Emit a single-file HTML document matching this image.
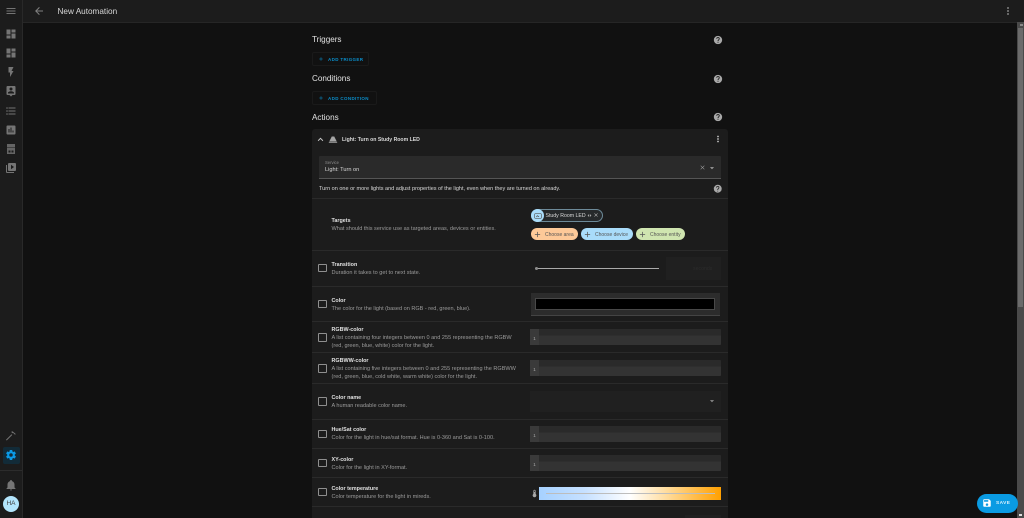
<!DOCTYPE html>
<html><head><meta charset="utf-8">
<style>
html,body{margin:0;padding:0;width:1024px;height:518px;overflow:hidden;background:#111;font-family:"Liberation Sans",sans-serif}
#w{position:relative;width:1024px;height:518px;overflow:hidden;background:#111;filter:blur(.35px)}
.a,.t,svg.i{position:absolute;display:block}
.t{white-space:nowrap;line-height:8px;height:8px}
.h{font-size:8.15px;color:#e1e1e1}
.n{font-size:5.4px;color:#e1e1e1;font-weight:bold}
.d{font-size:5.55px;color:#9b9b9b}
.sep{position:absolute;left:312px;width:416px;height:1px;background:#2a2a2a}
.cb{position:absolute;left:318px;width:6.5px;height:6.5px;border:1.3px solid #8f8f8f;border-radius:1px}
.num{position:absolute;left:530px;width:191px;height:16px;background:linear-gradient(#2a2a2a 0,#2a2a2a 40%,#333 40%,#333 100%);border-radius:1px}
.num b{position:absolute;left:0;top:0;width:9px;height:16px;background:#3a3a3a;font:normal 4.5px/20px "Liberation Sans",sans-serif;color:#aaa;text-align:center}
.chip{position:absolute;top:228px;height:12px;border-radius:6px;color:#555;font-size:5px;line-height:14px;white-space:nowrap}
.chip svg{position:absolute;left:1.5px;top:1.5px;width:9px;height:9px;fill:#555}
.chip span{position:absolute;top:0}
.btn{position:absolute;left:312px;border:1px solid #1a1a1a;border-radius:2px;box-sizing:border-box;height:14px}
.btn span{position:absolute;left:15px;top:0;line-height:13px;font-size:4.5px;letter-spacing:.35px;font-weight:bold;color:#0a8fcc;white-space:nowrap}
.btn svg{position:absolute;left:5px;top:3px;width:6px;height:6px;fill:#0a8fcc}
</style></head><body>
<svg width="0" height="0" style="position:absolute"><defs>
<symbol id="menu" viewBox="0 0 24 24"><path d="M3,6H21V8H3V6M3,11H21V13H3V11M3,16H21V18H3V16Z"/></symbol>
<symbol id="dash" viewBox="0 0 24 24"><path d="M13,3V9H21V3M13,21H21V11H13M3,21H11V15H3M3,13H11V3H3V13Z"/></symbol>
<symbol id="help" viewBox="0 0 24 24"><path d="M15.07,11.25L14.17,12.17C13.45,12.89 13,13.5 13,15H11V14.5C11,13.39 11.45,12.39 12.17,11.67L13.41,10.41C13.78,10.05 14,9.55 14,9C14,7.89 13.1,7 12,7A2,2 0 0,0 10,9H8A4,4 0 0,1 12,5A4,4 0 0,1 16,9C16,9.88 15.64,10.67 15.07,11.25M13,19H11V17H13M12,2A10,10 0 0,0 2,12A10,10 0 0,0 12,22A10,10 0 0,0 22,12C22,6.47 17.5,2 12,2Z"/></symbol>
<symbol id="dots" viewBox="0 0 24 24"><path d="M12,16A2,2 0 0,1 14,18A2,2 0 0,1 12,20A2,2 0 0,1 10,18A2,2 0 0,1 12,16M12,10A2,2 0 0,1 14,12A2,2 0 0,1 12,14A2,2 0 0,1 10,12A2,2 0 0,1 12,10M12,4A2,2 0 0,1 14,6A2,2 0 0,1 12,8A2,2 0 0,1 10,6A2,2 0 0,1 12,4Z"/></symbol>
<symbol id="plus" viewBox="0 0 24 24"><path d="M19,13H13V19H11V13H5V11H11V5H13V11H19V13Z"/></symbol>
<symbol id="close" viewBox="0 0 24 24"><path d="M19,6.41L17.59,5L12,10.59L6.41,5L5,6.41L10.59,12L5,17.59L6.41,19L12,13.41L17.59,19L19,17.59L13.41,12L19,6.41Z"/></symbol>
<symbol id="down" viewBox="0 0 24 24"><path d="M7,10L12,15L17,10H7Z"/></symbol>
</defs></svg>
<div id="w">
<!-- header -->
<div class="a" style="left:0;top:0;width:1024px;height:22px;background:#1c1c1c;border-bottom:1px solid #262626"></div>
<!-- sidebar -->
<div class="a" style="left:0;top:0;width:22px;height:518px;background:#1c1c1c;border-right:1px solid #292929"></div>
<div class="a" style="left:0;top:470px;width:22px;height:1px;background:#2c2c2c"></div>
<svg class="i" style="left:5px;top:5px;width:12px;height:12px;fill:#757575"><use href="#menu"/></svg>
<svg class="i" style="left:5px;top:27.5px;width:12px;height:12px;fill:#757575"><use href="#dash"/></svg>
<svg class="i" style="left:5px;top:47px;width:12px;height:12px;fill:#757575"><use href="#dash"/></svg>
<svg class="i" viewBox="0 0 24 24" style="left:5px;top:66px;width:12px;height:12px;fill:#757575"><path d="M7,2V13H10V22L17,10H13L17,2H7Z"/></svg>
<svg class="i" viewBox="0 0 24 24" style="left:5px;top:85px;width:12px;height:12px;fill:#757575"><path d="M5,2H19A2,2 0 0 1 21,4V18A2,2 0 0 1 19,20H15L12,23L9,20H5A2,2 0 0 1 3,18V4A2,2 0 0 1 5,2M12,5A3,3 0 1 0 12,11A3,3 0 1 0 12,5M6,17H18V15.5C18,13.5 14,12.5 12,12.5C10,12.5 6,13.5 6,15.5Z"/></svg>
<svg class="i" viewBox="0 0 24 24" style="left:5px;top:104.5px;width:12px;height:12px;fill:#757575"><path d="M7,5H21V7H7V5M7,13V11H21V13H7M4,4.5A1.5,1.5 0 0,1 5.5,6A1.5,1.5 0 0,1 4,7.5A1.5,1.5 0 0,1 2.5,6A1.5,1.5 0 0,1 4,4.5M4,10.5A1.5,1.5 0 0,1 5.5,12A1.5,1.5 0 0,1 4,13.5A1.5,1.5 0 0,1 2.5,12A1.5,1.5 0 0,1 4,10.5M7,19V17H21V19H7M4,16.5A1.5,1.5 0 0,1 5.5,18A1.5,1.5 0 0,1 4,19.5A1.5,1.5 0 0,1 2.5,18A1.5,1.5 0 0,1 4,16.5Z"/></svg>
<svg class="i" viewBox="0 0 24 24" style="left:5px;top:123.5px;width:12px;height:12px;fill:#757575"><path d="M19 3H5a2 2 0 0 0-2 2v14a2 2 0 0 0 2 2h14a2 2 0 0 0 2-2V5a2 2 0 0 0-2-2M9 17H7v-7h2v7m4 0h-2V7h2v10m4 0h-2v-4h2v4Z"/></svg>
<svg class="i" viewBox="0 0 24 24" style="left:5px;top:143px;width:12px;height:12px;fill:#656565"><path d="M4,2H20V9H4V2M4,10H20V22H4V10M7,15V19H11V15H7M13,15V19H17V15H13Z"/></svg>
<svg class="i" viewBox="0 0 24 24" style="left:5px;top:162px;width:12px;height:12px;fill:#757575"><path d="M4,6H2V20A2,2 0 0 0 4,22H18V20H4V6M20,2H8A2,2 0 0 0 6,4V16A2,2 0 0 0 8,18H20A2,2 0 0 0 22,16V4A2,2 0 0 0 20,2M12,14.5V5.5L18,10L12,14.5Z"/></svg>
<svg class="i" viewBox="0 0 24 24" style="left:5px;top:430px;width:12px;height:12px;fill:#757575"><path d="M2,19.6L3.4,21L14.5,9.9L13.1,8.5L2,19.6M12.5,4L15,6.5L16,5.5L20,9.5L21.5,8L15.5,3C14.5,2.3 13.5,2.8 12.5,4Z"/></svg>
<div class="a" style="left:2.5px;top:447px;width:17px;height:17px;background:#122b38;border-radius:2px"></div>
<svg class="i" viewBox="0 0 24 24" style="left:5px;top:449px;width:12px;height:12px;fill:#0a9be8"><path d="M12,15.5A3.5,3.5 0 0,1 8.5,12A3.5,3.5 0 0,1 12,8.5A3.5,3.5 0 0,1 15.5,12A3.5,3.5 0 0,1 12,15.5M19.43,12.97C19.47,12.65 19.5,12.33 19.5,12C19.5,11.67 19.47,11.34 19.43,11L21.54,9.37C21.73,9.22 21.78,8.95 21.66,8.73L19.66,5.27C19.54,5.05 19.27,4.96 19.05,5.05L16.56,6.05C16.04,5.66 15.5,5.32 14.87,5.07L14.5,2.42C14.46,2.18 14.25,2 14,2H10C9.75,2 9.54,2.18 9.5,2.42L9.13,5.07C8.5,5.32 7.96,5.66 7.44,6.05L4.95,5.05C4.73,4.96 4.46,5.05 4.34,5.27L2.34,8.73C2.21,8.95 2.27,9.22 2.46,9.37L4.57,11C4.53,11.34 4.5,11.67 4.5,12C4.5,12.33 4.53,12.65 4.57,12.97L2.46,14.63C2.27,14.78 2.21,15.05 2.34,15.27L4.34,18.73C4.46,18.95 4.73,19.03 4.95,18.95L7.44,17.94C7.96,18.34 8.5,18.68 9.13,18.93L9.5,21.58C9.54,21.82 9.75,22 10,22H14C14.25,22 14.46,21.82 14.5,21.58L14.87,18.93C15.5,18.67 16.04,18.34 16.56,17.94L19.05,18.95C19.27,19.03 19.54,18.95 19.66,18.73L21.66,15.27C21.78,15.05 21.73,14.78 21.54,14.63L19.43,12.97Z"/></svg>
<svg class="i" viewBox="0 0 24 24" style="left:5px;top:478.5px;width:12px;height:12px;fill:#757575"><path d="M21,19V20H3V19L5,17V11C5,7.9 7.03,5.17 10,4.29C10,4.19 10,4.1 10,4A2,2 0 0,1 12,2A2,2 0 0,1 14,4C14,4.1 14,4.19 14,4.29C16.97,5.17 19,7.9 19,11V17L21,19M14,21A2,2 0 0,1 12,23A2,2 0 0,1 10,21"/></svg>
<div class="a" style="left:3px;top:496px;width:16px;height:16px;border-radius:50%;background:#b3e5fc;color:#444;font-size:6.5px;line-height:16px;text-align:center">HA</div>

<!-- top bar content -->
<svg class="i" viewBox="0 0 24 24" style="left:32.5px;top:5px;width:12px;height:12px;fill:#808080"><path d="M20,11V13H8L13.5,18.5L12.08,19.92L4.16,12L12.08,4.08L13.5,5.5L8,11H20Z"/></svg>
<div class="t" style="left:57.5px;top:8px;font-size:8.2px;color:#d8d8d8">New Automation</div>
<svg class="i" style="left:1002px;top:5px;width:12px;height:12px;fill:#808080"><use href="#dots"/></svg>

<!-- sections -->
<div class="t h" style="left:312px;top:35.5px">Triggers</div>
<svg class="i" style="left:713px;top:34.5px;width:10px;height:10px;fill:#a8a8a8"><use href="#help"/></svg>
<div class="btn" style="top:52px;width:57px"><svg><use href="#plus"/></svg><span>ADD TRIGGER</span></div>
<div class="t h" style="left:312px;top:74.5px">Conditions</div>
<svg class="i" style="left:713px;top:73.5px;width:10px;height:10px;fill:#a8a8a8"><use href="#help"/></svg>
<div class="btn" style="top:91px;width:65px"><svg><use href="#plus"/></svg><span>ADD CONDITION</span></div>
<div class="t h" style="left:312px;top:113.5px">Actions</div>
<svg class="i" style="left:713px;top:112px;width:10px;height:10px;fill:#a8a8a8"><use href="#help"/></svg>

<!-- card -->
<div class="a" style="left:312px;top:129px;width:416px;height:389px;background:#1c1c1c;border-radius:3px 3px 0 0"></div>
<svg class="i" viewBox="0 0 24 24" style="left:314.5px;top:134px;width:11px;height:11px;fill:#c8c8c8"><path d="M7.41,15.41L12,10.83L16.59,15.41L18,14L12,8L6,14L7.41,15.41Z"/></svg>
<svg class="i" viewBox="0 0 24 24" style="left:328px;top:134px;width:10px;height:10px;fill:#a5a5a5"><path d="M9,6H15L21,18H3Z M2,19H22V21H2Z"/></svg>
<div class="t n" style="left:342px;top:136px;font-size:5.15px;color:#d8d8d8">Light: Turn on Study Room LED</div>
<svg class="i" style="left:712.5px;top:134px;width:10px;height:10px;fill:#d0d0d0"><use href="#dots"/></svg>

<div class="a" style="left:319px;top:156px;width:402px;height:21.5px;background:#2a2a2a;border-bottom:1px solid #555;border-radius:1px 1px 0 0"></div>
<div class="t" style="left:325px;top:158.5px;font-size:4.2px;color:#8c8c8c">Service</div>
<div class="t" style="left:325px;top:166px;font-size:5.6px;color:#d8d8d8">Light: Turn on</div>
<svg class="i" style="left:699px;top:164px;width:7px;height:7px;fill:#9c9c9c"><use href="#close"/></svg>
<svg class="i" style="left:706.5px;top:162.5px;width:10px;height:10px;fill:#9c9c9c"><use href="#down"/></svg>
<div class="t" style="left:319px;top:185px;font-size:5.53px;color:#d8d8d8">Turn on one or more lights and adjust properties of the light, even when they are turned on already.</div>
<svg class="i" style="left:712.5px;top:183.5px;width:9.5px;height:9.5px;fill:#a8a8a8"><use href="#help"/></svg>

<div class="sep" style="top:198px"></div>
<div class="sep" style="top:250px"></div>
<div class="sep" style="top:286px"></div>
<div class="sep" style="top:321px"></div>
<div class="sep" style="top:352px"></div>
<div class="sep" style="top:383px"></div>
<div class="sep" style="top:419px"></div>
<div class="sep" style="top:448px"></div>
<div class="sep" style="top:477px"></div>
<div class="sep" style="top:506px"></div>

<!-- targets -->
<div class="t n" style="left:331.5px;top:216.5px">Targets</div>
<div class="t d" style="left:331.5px;top:225px">What should this service use as targeted areas, devices or entities.</div>

<div class="a" style="left:531px;top:209px;width:69.5px;height:11px;border:1px solid #6d8a99;border-radius:7px;background:#26292b"></div>
<div class="a" style="left:531px;top:209px;width:13px;height:13px;border-radius:50%;background:#a9dcfa"></div>
<svg class="i" viewBox="0 0 24 24" style="left:533.5px;top:211.5px;width:8px;height:8px;fill:none;stroke:#555;stroke-width:2"><rect x="2" y="5" width="20" height="14" rx="2"/><path d="M7 15l3-4 3 3 2-2"/></svg>
<div class="t" style="left:545.5px;top:211.5px;font-size:5.2px;color:#d8d8d8">Study Room LED</div>
<svg class="i" viewBox="0 0 24 24" style="left:587px;top:212.5px;width:5px;height:5px;fill:#aaa"><path d="M10 5V19L3 12ZM14 5V19L21 12Z"/></svg>
<svg class="i" style="left:593px;top:212px;width:6px;height:6px;fill:#bbb"><use href="#close"/></svg>

<div class="chip" style="left:531px;width:47px;background:#fdc998"><svg><use href="#plus"/></svg><span style="left:14px">Choose area</span></div>
<div class="chip" style="left:581px;width:52px;background:#a9dcfa"><svg><use href="#plus"/></svg><span style="left:14px">Choose device</span></div>
<div class="chip" style="left:636px;width:49px;background:#cfe5b0"><svg><use href="#plus"/></svg><span style="left:14px">Choose entity</span></div>

<!-- transition -->
<div class="cb" style="top:263.5px"></div>
<div class="t n" style="left:331.5px;top:261px">Transition</div>
<div class="t d" style="left:331.5px;top:269px">Duration it takes to get to next state.</div>
<div class="a" style="left:535px;top:268px;width:124px;height:1px;background:#aaa"></div>
<div class="a" style="left:534.5px;top:266.5px;width:3.5px;height:3.5px;border-radius:50%;background:#8c8c8c"></div>
<div class="a" style="left:666px;top:257px;width:55px;height:23px;background:#202020"></div>
<div class="t" style="left:693px;top:265px;font-size:5.2px;color:#2c2c2c">seconds</div>

<!-- color -->
<div class="cb" style="top:299.5px"></div>
<div class="t n" style="left:331.5px;top:297px">Color</div>
<div class="t d" style="left:331.5px;top:305px">The color for the light (based on RGB - red, green, blue).</div>
<div class="a" style="left:531px;top:293px;width:189px;height:22px;background:#2c2c2c;border-bottom:1px solid #444"></div>
<div class="a" style="left:535px;top:298px;width:180px;height:12px;box-sizing:border-box;background:#000;border:1px solid #484848"></div>

<!-- rgbw -->
<div class="cb" style="top:333px"></div>
<div class="t n" style="left:331.5px;top:326px">RGBW-color</div>
<div class="t d" style="left:331.5px;top:334px">A list containing four integers between 0 and 255 representing the RGBW</div>
<div class="t d" style="left:331.5px;top:342px">(red, green, blue, white) color for the light.</div>
<div class="num" style="top:329px"><b>1</b></div>

<!-- rgbww -->
<div class="cb" style="top:364px"></div>
<div class="t n" style="left:331.5px;top:357px">RGBWW-color</div>
<div class="t d" style="left:331.5px;top:365px">A list containing five integers between 0 and 255 representing the RGBWW</div>
<div class="t d" style="left:331.5px;top:373px">(red, green, blue, cold white, warm white) color for the light.</div>
<div class="num" style="top:360px"><b>1</b></div>

<!-- color name -->
<div class="cb" style="top:397px"></div>
<div class="t n" style="left:331.5px;top:394px">Color name</div>
<div class="t d" style="left:331.5px;top:402px">A human readable color name.</div>
<div class="a" style="left:530px;top:391px;width:191px;height:21px;background:#202020"></div>
<svg class="i" style="left:706.5px;top:396px;width:10px;height:10px;fill:#8c8c8c"><use href="#down"/></svg>

<!-- hue -->
<div class="cb" style="top:429.5px"></div>
<div class="t n" style="left:331.5px;top:426px">Hue/Sat color</div>
<div class="t d" style="left:331.5px;top:434px">Color for the light in hue/sat format. Hue is 0-360 and Sat is 0-100.</div>
<div class="num" style="top:426px"><b>1</b></div>

<!-- xy -->
<div class="cb" style="top:458.5px"></div>
<div class="t n" style="left:331.5px;top:456px">XY-color</div>
<div class="t d" style="left:331.5px;top:464px">Color for the light in XY-format.</div>
<div class="num" style="top:455px"><b>1</b></div>

<!-- temp -->
<div class="cb" style="top:487.5px"></div>
<div class="t n" style="left:331.5px;top:485px">Color temperature</div>
<div class="t d" style="left:331.5px;top:493px">Color temperature for the light in mireds.</div>
<svg class="i" viewBox="0 0 24 24" style="left:529.5px;top:489px;width:9px;height:9px;fill:#a8a8a8"><path d="M15 13V5A3 3 0 0 0 9 5V13A5 5 0 1 0 15 13M12 4A1 1 0 0 1 13 5V8H11V5A1 1 0 0 1 12 4Z"/></svg>
<div class="a" style="left:539px;top:487px;width:182px;height:13px;background:linear-gradient(90deg,#a6d1ff 0%,#c6e0ff 25%,#fff 50%,#ffe0a8 68%,#ffa000 100%)"></div>
<div class="a" style="left:546px;top:493px;width:169px;height:1px;background:#bdbdbd"></div>
<div class="a" style="left:685px;top:515px;width:36px;height:3px;background:#202020"></div>

<!-- scrollbar -->
<div class="a" style="left:1017px;top:22px;width:7px;height:496px;background:#4a4a4a"></div>
<div class="a" style="left:1018px;top:28px;width:5px;height:279px;background:#6b6b6b"></div>
<div class="a" style="left:1019.5px;top:24px;width:3px;height:2px;background:#8a8a8a"></div>
<div class="a" style="left:1019px;top:514px;width:3px;height:2px;background:#ddd"></div>

<!-- FAB -->
<div class="a" style="left:977px;top:493.5px;width:41px;height:19.5px;border-radius:10px;background:#0a9be3"></div>
<svg class="i" viewBox="0 0 24 24" style="left:981.5px;top:498px;width:10px;height:10px;fill:#fff"><path d="M15,9H5V5H15M12,19A3,3 0 0,1 9,16A3,3 0 0,1 12,13A3,3 0 0,1 15,16A3,3 0 0,1 12,19M17,3H5C3.89,3 3,3.9 3,5V19A2,2 0 0,0 5,21H19A2,2 0 0,0 21,19V7L17,3Z"/></svg>
<div class="t" style="left:996px;top:499.5px;font-size:4.8px;letter-spacing:.4px;font-weight:bold;color:#d8f0fc">SAVE</div>
</div>
</body></html>
